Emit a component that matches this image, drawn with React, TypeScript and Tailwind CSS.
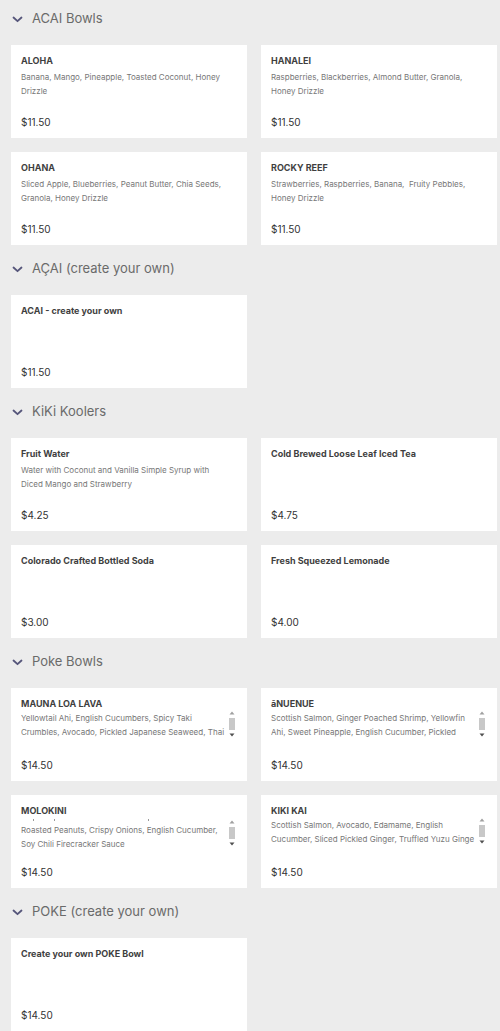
import React from "react";

type Item = {
  name: string;
  desc?: string[];
  price: string;
  scroll?: boolean;
  peek?: boolean;
};

type Section = { title: string; items: Item[] };

const sections: Section[] = [
  {
    title: "ACAI Bowls",
    items: [
      {
        name: "ALOHA",
        desc: ["Banana, Mango, Pineapple, Toasted Coconut, Honey", "Drizzle"],
        price: "$11.50",
      },
      {
        name: "HANALEI",
        desc: ["Raspberries, Blackberries, Almond Butter, Granola,", "Honey Drizzle"],
        price: "$11.50",
      },
      {
        name: "OHANA",
        desc: ["Sliced Apple, Blueberries, Peanut Butter, Chia Seeds,", "Granola, Honey Drizzle"],
        price: "$11.50",
      },
      {
        name: "ROCKY REEF",
        desc: ["Strawberries, Raspberries, Banana,  Fruity Pebbles,", "Honey Drizzle"],
        price: "$11.50",
      },
    ],
  },
  {
    title: "AÇAI (create your own)",
    items: [{ name: "ACAI - create your own", price: "$11.50" }],
  },
  {
    title: "KiKi Koolers",
    items: [
      {
        name: "Fruit Water",
        desc: ["Water with Coconut and Vanilla Simple Syrup with", "Diced Mango and Strawberry"],
        price: "$4.25",
      },
      { name: "Cold Brewed Loose Leaf Iced Tea", price: "$4.75" },
      { name: "Colorado Crafted Bottled Soda", price: "$3.00" },
      { name: "Fresh Squeezed Lemonade", price: "$4.00" },
    ],
  },
  {
    title: "Poke Bowls",
    items: [
      {
        name: "MAUNA LOA LAVA",
        desc: ["Yellowtail Ahi, English Cucumbers, Spicy Taki", "Crumbles, Avocado, Pickled Japanese Seaweed, Thai"],
        price: "$14.50",
        scroll: true,
      },
      {
        name: "āNUENUE",
        desc: ["Scottish Salmon, Ginger Poached Shrimp, Yellowfin", "Ahi, Sweet Pineapple, English Cucumber, Pickled"],
        price: "$14.50",
        scroll: true,
      },
      {
        name: "MOLOKINI",
        desc: ["Roasted Peanuts, Crispy Onions, English Cucumber,", "Soy Chili Firecracker Sauce"],
        price: "$14.50",
        scroll: true,
        peek: true,
      },
      {
        name: "KIKI KAI",
        desc: ["Scottish Salmon, Avocado, Edamame, English", "Cucumber, Sliced Pickled Ginger, Truffled Yuzu Ginge"],
        price: "$14.50",
        scroll: true,
      },
    ],
  },
  {
    title: "POKE (create your own)",
    items: [{ name: "Create your own POKE Bowl", price: "$14.50" }],
  },
];

const Chevron = () => (
  <svg width="11" height="7" viewBox="0 0 11 7" className="shrink-0">
    <polyline
      points="1.5,1.5 5.5,5.2 9.5,1.5"
      fill="none"
      stroke="#55557a"
      strokeWidth="1.8"
      strokeLinecap="round"
      strokeLinejoin="round"
    />
  </svg>
);

const FakeScrollbar = () => (
  <div className="flex flex-col items-center w-[8px] h-[28px] shrink-0">
    <svg width="6" height="4" viewBox="0 0 6 4">
      <polygon points="3,0.5 5.5,3.5 0.5,3.5" fill="#a0a0a0" />
    </svg>
    <div className="w-[6px] h-[12px] bg-[#c8c8c8] my-[3px]" />
    <svg width="6" height="4" viewBox="0 0 6 4">
      <polygon points="0.5,0.5 5.5,0.5 3,3.5" fill="#505050" />
    </svg>
  </div>
);

// clipped tail of the line scrolled above the visible box
const Peek = () => (
  <div className="h-[7px] relative">
    <div className="absolute left-[12px] top-[3px] w-[1px] h-[2px] bg-[#999]" />
    <div className="absolute left-[33px] top-[3px] w-[1px] h-[2px] bg-[#999]" />
    <div className="absolute left-[127px] top-[3px] w-[1px] h-[2px] bg-[#999]" />
  </div>
);

const Card = ({ item }: { item: Item }) => (
  <div className="bg-white h-[93px] flex flex-col pl-[10px] pr-[11px] pt-[10px] pb-[10px]">
    <div className="text-[9px] leading-[11px] font-bold text-[#3f3f3f]">{item.name}</div>
    {item.desc && !item.scroll && (
      <div className="mt-[4px] text-[8px] leading-[14px] text-[#777]">
        {item.desc.map((l) => (
          <div key={l} className="whitespace-pre">{l}</div>
        ))}
      </div>
    )}
    {item.desc && item.scroll && (
      <div className={"flex items-center gap-[3px] " + (item.peek ? "" : "mt-[1px]")}>
        <div
          className={
            "flex-1 overflow-hidden text-[8px] leading-[14px] text-[#777] " +
            (item.peek ? "h-[36px]" : "h-[30px] pt-[1px]")
          }
        >
          {item.peek && <Peek />}
          {item.desc.map((l) => (
            <div key={l} className="whitespace-nowrap overflow-hidden">{l}</div>
          ))}
        </div>
        <FakeScrollbar />
      </div>
    )}
    <div className="mt-auto text-[10px] leading-[12px] text-[#333]">{item.price}</div>
  </div>
);

export default function App() {
  return (
    <div
      className="min-h-[1031px] bg-[#ececec] pt-[9px] pl-[11px] pr-[3px] pb-[10px]"
      style={{ fontFamily: "Inter, 'Open Sans', sans-serif" }}
    >
      <div className="flex flex-col gap-[14px]">
        {sections.map((s) => (
          <div key={s.title} className="flex flex-col">
            <div className="h-[20px] flex items-center gap-[9px] mb-[16px] pl-[1px]">
              <Chevron />
              <span className="text-[13px] text-[#6a6a6a]">{s.title}</span>
            </div>
            <div className="grid grid-cols-[236px_236px] gap-[14px]">
              {s.items.map((it) => (
                <Card key={it.name} item={it} />
              ))}
            </div>
          </div>
        ))}
      </div>
    </div>
  );
}
